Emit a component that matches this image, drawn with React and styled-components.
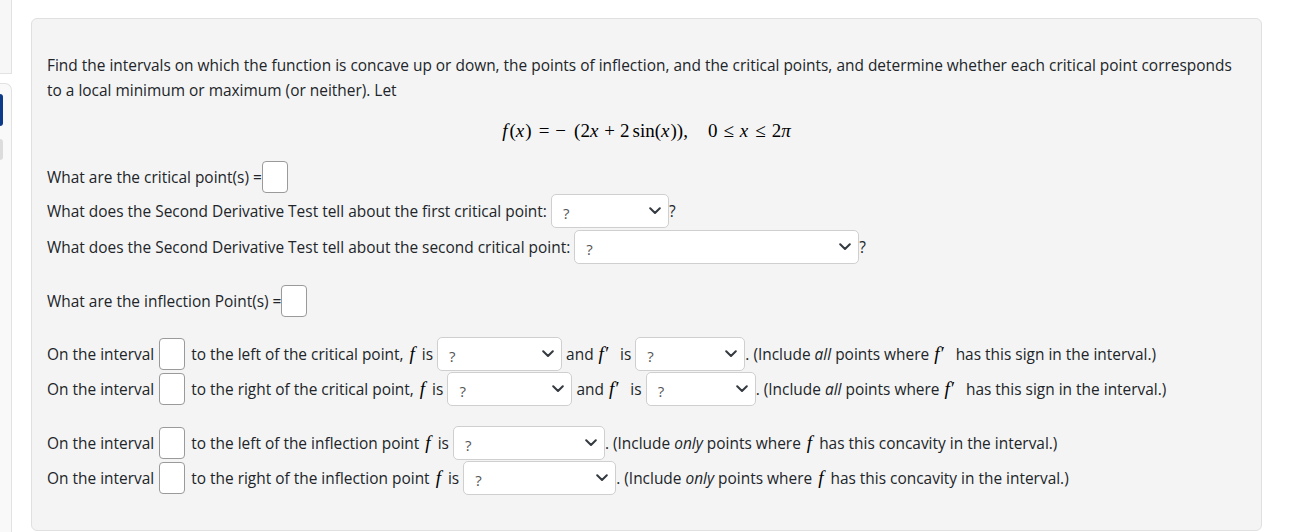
import React from 'react';
import styled, { createGlobalStyle } from 'styled-components';

const Global = createGlobalStyle`
  html, body { margin: 0; padding: 0; background: #fff; }
  body {
    font-family: 'Open Sans', 'Noto Sans', sans-serif;
    font-size: 15.45px;
    color: #212529;
  }
`;

const Page = styled.div`
  display: flex;
  align-items: stretch;
  height: 532px;
  overflow: hidden;
`;

const Sidebar = styled.aside`
  width: 12px;
  flex: none;
  display: flex;
  flex-direction: column;
`;

const SideTop = styled.div`
  height: 73px;
  background: #f7f7f7;
  border-right: 1px solid #e2e2e2;
  border-bottom: 1px solid #e2e2e2;
`;

const SidePanel = styled.div`
  margin-top: 9px;
  flex: 1;
  background: #f9f9f9;
  border-top: 1px solid #e2e2e2;
  border-right: 1px solid #e2e2e2;
  border-top-right-radius: 7px;
  padding-top: 10px;
  display: flex;
  flex-direction: column;
  gap: 13px;
`;

const NavPill = styled.div`
  width: 3px;
  height: ${(p) => p.$h}px;
  background: ${(p) => p.$c};
  border-radius: 0 3px 3px 0;
`;

const Main = styled.main`
  flex: 1;
  padding: 18px 0 0 19px;
`;

const Card = styled.section`
  width: 1231px;
  height: 513px;
  box-sizing: border-box;
  background: #f4f4f4;
  border: 1px solid #e0e0e0;
  border-radius: 6px;
  padding: 34px 15px 0;
`;

const Para = styled.p`
  margin: 0;
  line-height: 25px;
`;

const MathDisplay = styled.div`
  display: flex;
  justify-content: center;
  align-items: center;
  height: 24px;
  margin-top: 16px;
  font-family: 'Liberation Serif', 'DejaVu Serif', serif;
  font-size: 19px;
  color: #000;
  white-space: pre;
`;

const Mi = styled.i`
  font-family: 'Liberation Serif', 'DejaVu Serif', serif;
  font-style: italic;
  font-size: 19px;
  color: #000;
  margin-left: ${(p) => p.$l || 0}px;
  margin-right: ${(p) => p.$r || 0}px;
`;

const Sp = styled.span`
  display: inline-block;
  width: ${(p) => p.$w}px;
`;

const Line = styled.div`
  display: flex;
  align-items: center;
  height: ${(p) => p.$h || 34}px;
  margin-top: ${(p) => p.$mt || 0}px;
  white-space: pre;
`;

const AnswerBox = styled.input`
  box-sizing: border-box;
  width: 26px;
  height: ${(p) => p.$h || 32}px;
  margin: 0 ${(p) => p.$mr || 0}px 0 ${(p) => p.$ml || 0}px;
  padding: 0;
  background: #fff;
  border: 1px solid #9a9a9a;
  border-radius: 4px;
  flex: none;
`;

const SelectWrap = styled.span`
  position: relative;
  display: inline-flex;
  flex: none;
  width: ${(p) => p.$w}px;
  height: 34px;
`;

const Select = styled.select`
  appearance: none;
  -webkit-appearance: none;
  box-sizing: border-box;
  width: 100%;
  height: 100%;
  margin: 0;
  padding: 4px 24px 0 11px;
  background: #fff;
  border: 1px solid #cfcfcf;
  border-radius: 5px;
  font-family: 'Open Sans', 'Noto Sans', sans-serif;
  font-size: 15px;
  color: #555;
`;

const Chevron = styled.svg`
  position: absolute;
  right: 8px;
  top: 50%;
  margin-top: -4px;
  pointer-events: none;
`;

const Em = styled.em`
  font-style: italic;
`;

function Drop({ w }) {
  return (
    <SelectWrap $w={w}>
      <Select defaultValue="?">
        <option>?</option>
      </Select>
      <Chevron width="12" height="8" viewBox="0 0 12 8">
        <path d="M1.2 1.2 6 6 10.8 1.2" fill="none" stroke="#343a40" strokeWidth="2" strokeLinecap="round" strokeLinejoin="round" />
      </Chevron>
    </SelectWrap>
  );
}

const F = () => <Mi $l={2} $r={3}>f</Mi>;
const Fp = () => <Mi $l={1} $r={8}>f′</Mi>;

export default function App() {
  return (
    <>
      <Global />
      <Page>
        <Sidebar>
          <SideTop />
          <SidePanel>
            <NavPill $h={32} $c="#0e3a8a" />
            <NavPill $h={21} $c="#dcdcdc" />
          </SidePanel>
        </Sidebar>
        <Main>
          <Card>
            <Para>
              Find the intervals on which the function is concave up or down, the points of inflection, and the
              critical points, and determine whether each critical point corresponds to a local minimum or maximum
              (or neither). Let
            </Para>
            <MathDisplay>
              <Mi $r={2}>f</Mi>(<Mi $r={1}>x</Mi>)<Sp $w={7} />=<Sp $w={6} />−<Sp $w={8} />(2<Mi $r={1}>x</Mi>
              <Sp $w={5} />+<Sp $w={5} />2<Sp $w={3} />sin(<Mi $r={1}>x</Mi>)),<Sp $w={20} />0<Sp $w={6} />≤
              <Sp $w={6} />
              <Mi $r={1}>x</Mi>
              <Sp $w={6} />≤<Sp $w={6} />2<Mi>π</Mi>
            </MathDisplay>
            <Line $h={32} $mt={18}>
              What are the critical point(s) =<AnswerBox $h={32} />
            </Line>
            <Line $mt={1}>
              What does the Second Derivative Test tell about the first critical point:{' '}
              <Drop w={118} />?
            </Line>
            <Line $mt={2}>
              What does the Second Derivative Test tell about the second critical point:{' '}
              <Drop w={285} />?
            </Line>
            <Line $h={32} $mt={21}>
              What are the inflection Point(s) =<AnswerBox $h={32} />
            </Line>
            <Line $mt={20}>
              {'On the interval'}
              <AnswerBox $ml={5} $mr={2} />
              {' to the left of the critical point, '}
              <F />
              {' is '}
              <Drop w={125} />
              {' and '}
              <Fp />
              {' is '}
              <Drop w={110} />
              {'. (Include '}
              <Em>all</Em>
              {' points where '}
              <Fp />
              {' has this sign in the interval.)'}
            </Line>
            <Line $mt={1}>
              {'On the interval'}
              <AnswerBox $ml={5} $mr={2} />
              {' to the right of the critical point, '}
              <F />
              {' is '}
              <Drop w={125} />
              {' and '}
              <Fp />
              {' is '}
              <Drop w={110} />
              {'. (Include '}
              <Em>all</Em>
              {' points where '}
              <Fp />
              {' has this sign in the interval.)'}
            </Line>
            <Line $mt={20}>
              {'On the interval'}
              <AnswerBox $ml={5} $mr={2} />
              {' to the left of the inflection point '}
              <F />
              {' is '}
              <Drop w={152} />
              {'. (Include '}
              <Em>only</Em>
              {' points where '}
              <F />
              {' has this concavity in the interval.)'}
            </Line>
            <Line $mt={1}>
              {'On the interval'}
              <AnswerBox $ml={5} $mr={2} />
              {' to the right of the inflection point '}
              <F />
              {' is '}
              <Drop w={153} />
              {'. (Include '}
              <Em>only</Em>
              {' points where '}
              <F />
              {' has this concavity in the interval.)'}
            </Line>
          </Card>
        </Main>
      </Page>
    </>
  );
}
